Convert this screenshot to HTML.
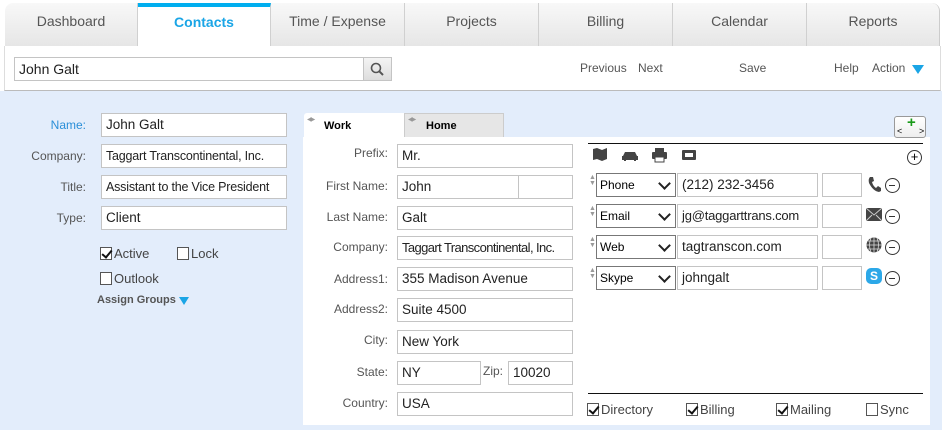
<!DOCTYPE html>
<html><head><style>
*{box-sizing:border-box;margin:0;padding:0}
body{width:942px;height:430px;overflow:hidden;background:#fff;font-family:"Liberation Sans",sans-serif;position:relative}
.a{position:absolute}
.tab{position:absolute;top:3px;height:43px;background:linear-gradient(#f8f8f8,#e6e6e6);border-right:1px solid #d0d0d0;text-align:center;line-height:37px;font-size:14px;color:#555}
.in{position:absolute;height:24px;border:1px solid #c4c4c4;background:#fff;font-size:13.5px;color:#222;padding-left:4px;line-height:22px;white-space:nowrap;overflow:hidden}
.lb{position:absolute;font-size:12px;color:#555;text-align:right}
.sel{position:absolute;height:24px;border:1px solid #777;background:#fff;font-size:12px;padding-left:3px;line-height:22px;width:80px}
.sel:after{content:"";position:absolute;right:6px;top:5px;width:7px;height:7px;border-right:2px solid #222;border-bottom:2px solid #222;transform:rotate(45deg)}
.cb{display:inline-block;width:12px;height:13px;border:1px solid #555;vertical-align:-2px;margin-right:2px;position:relative;background:#fff}
.cb.c:after{content:"";position:absolute;left:3px;top:0;width:4px;height:8px;border-right:2px solid #111;border-bottom:2px solid #111;transform:rotate(40deg)}
.ck{position:absolute;font-size:13px;color:#444}
.minus{position:absolute;width:15px;height:15px;border:1.5px solid #333;border-radius:50%}
.minus:after{content:"";position:absolute;left:3px;top:5.5px;width:6px;height:1.5px;background:#333}
.arr{position:absolute;font-size:7px;color:#999;line-height:6px}
</style></head><body>
<div class="a" style="left:0;top:0;width:942px;height:46px;background:#fff"></div>
<div class="tab" style="left:5px;width:133px;border-top-left-radius:8px">Dashboard</div>
<div class="tab" style="left:138px;width:133px;background:#fff;color:#1aa5e6;font-weight:bold;border-top:4px solid #00aeef;line-height:30px;height:44px">Contacts</div>
<div class="tab" style="left:271px;width:134px">Time / Expense</div>
<div class="tab" style="left:405px;width:134px">Projects</div>
<div class="tab" style="left:539px;width:134px">Billing</div>
<div class="tab" style="left:673px;width:134px">Calendar</div>
<div class="tab" style="left:807px;width:133px;border-top-right-radius:8px;border-right:1px solid #ccc">Reports</div>
<div class="a" style="left:4px;top:46px;width:937px;height:45px;background:#fff;border-bottom:1px solid #bbb;border-left:1px solid #ddd;border-right:1px solid #ddd"></div>
<div class="in" style="left:14px;top:57px;width:350px;height:24px;font-size:14px">John Galt</div>
<div class="a" style="left:363px;top:57px;width:29px;height:24px;border:1px solid #c4c4c4;background:linear-gradient(#f4f4f4,#ddd)"><svg width="27" height="22"><circle cx="12" cy="10" r="4.5" fill="none" stroke="#555" stroke-width="1.6"/><path d="M15 13l4 4" stroke="#555" stroke-width="2"/></svg></div>
<div class="a" style="left:580px;top:61px;font-size:12px;color:#555">Previous</div>
<div class="a" style="left:638px;top:61px;font-size:12px;color:#555">Next</div>
<div class="a" style="left:739px;top:61px;font-size:12px;color:#555">Save</div>
<div class="a" style="left:834px;top:61px;font-size:12px;color:#555">Help</div>
<div class="a" style="left:872px;top:61px;font-size:12px;color:#555">Action</div>
<div class="a" style="left:912px;top:65px;border-left:6px solid transparent;border-right:6px solid transparent;border-top:9px solid #1aa5e6"></div>
<div class="a" style="left:0;top:91px;width:942px;height:339px;background:#e3edfb"></div>

<div class="lb" style="left:0;width:86px;top:118px;color:#2a8fd8">Name:</div>
<div class="lb" style="left:0;width:86px;top:149px">Company:</div>
<div class="lb" style="left:0;width:86px;top:180px">Title:</div>
<div class="lb" style="left:0;width:86px;top:211px">Type:</div>
<div class="in" style="left:101px;top:113px;width:186px">John Galt</div>
<div class="in" style="left:101px;top:144px;width:186px;font-size:12.5px;letter-spacing:-0.2px">Taggart Transcontinental, Inc.</div>
<div class="in" style="left:101px;top:175px;width:186px;font-size:12.5px;letter-spacing:-0.2px">Assistant to the Vice President</div>
<div class="in" style="left:101px;top:206px;width:186px">Client</div>
<div class="ck" style="left:100px;top:246px"><span class="cb c"></span>Active</div>
<div class="ck" style="left:177px;top:246px"><span class="cb"></span>Lock</div>
<div class="ck" style="left:100px;top:271px"><span class="cb"></span>Outlook</div>
<div class="a" style="left:97px;top:294px;font-size:11px;color:#555;font-weight:bold">Assign Groups</div>
<div class="a" style="left:179px;top:297px;border-left:5px solid transparent;border-right:5px solid transparent;border-top:8px solid #1aa5e6"></div>

<div class="a" style="left:303px;top:137px;width:627px;height:288px;background:#fff"></div>
<div class="a" style="left:304px;top:113px;width:100px;height:25px;background:#fff;border-top-left-radius:3px;font-size:11px;font-weight:bold;padding:7px 0 0 20px">Work</div>
<div class="a" style="left:404px;top:113px;width:100px;height:24px;background:#e6e6e6;border:1px solid #ccc;border-bottom:none;font-size:11px;font-weight:bold;padding:6px 0 0 21px">Home</div>
<div class="a" style="left:307px;top:116px;font-size:6px;color:#999;letter-spacing:-1px">◀▶</div>
<div class="a" style="left:408px;top:116px;font-size:6px;color:#999;letter-spacing:-1px">◀▶</div>
<div class="a" style="left:894px;top:116px;width:32px;height:22px;border:1px solid #999;border-radius:3px;background:linear-gradient(#fff,#eee);font-size:9px"><span class="a" style="left:2px;top:9px">&lt;</span><span class="a" style="left:12px;top:-3px;color:#1a9a1a;font-size:15px;font-weight:bold">+</span><span class="a" style="left:24px;top:9px">&gt;</span></div>

<div class="lb" style="left:300px;width:88px;top:146px">Prefix:</div>
<div class="lb" style="left:300px;width:88px;top:179px">First Name:</div>
<div class="lb" style="left:300px;width:88px;top:210px">Last Name:</div>
<div class="lb" style="left:300px;width:88px;top:240px">Company:</div>
<div class="lb" style="left:300px;width:88px;top:272px">Address1:</div>
<div class="lb" style="left:300px;width:88px;top:302px">Address2:</div>
<div class="lb" style="left:300px;width:88px;top:333px">City:</div>
<div class="lb" style="left:300px;width:88px;top:365px">State:</div>
<div class="lb" style="left:470px;width:33px;top:364px">Zip:</div>
<div class="lb" style="left:300px;width:88px;top:396px">Country:</div>
<div class="in" style="left:397px;top:144px;width:176px">Mr.</div>
<div class="in" style="left:397px;top:175px;width:122px">John</div>
<div class="in" style="left:518px;top:175px;width:55px"></div>
<div class="in" style="left:397px;top:206px;width:176px">Galt</div>
<div class="in" style="left:397px;top:236px;width:176px;font-size:13px;letter-spacing:-0.6px">Taggart Transcontinental, Inc.</div>
<div class="in" style="left:397px;top:267px;width:176px">355 Madison Avenue</div>
<div class="in" style="left:397px;top:298px;width:176px">Suite 4500</div>
<div class="in" style="left:397px;top:330px;width:176px">New York</div>
<div class="in" style="left:397px;top:361px;width:84px">NY</div>
<div class="in" style="left:508px;top:361px;width:65px">10020</div>
<div class="in" style="left:397px;top:392px;width:176px">USA</div>

<div class="a" style="left:588px;top:143px;width:335px;height:1px;background:#111"></div>
<svg class="a" style="left:590px;top:146px" width="120" height="20" fill="#444"><path d="M3 3l4-1 5 2 5-2v11l-5 2-5-2-4 1z"/><path d="M33 10l2-4h10l2 4h1v4h-2v1h-2v-1h-8v1h-2v-1h-2v-4z"/><rect x="65" y="2" width="9" height="4"/><rect x="62" y="6" width="15" height="7" rx="1"/><rect x="65" y="11" width="9" height="5" fill="#fff" stroke="#444"/><rect x="92" y="4" width="14" height="10" rx="1"/><rect x="95" y="7" width="8" height="4" fill="#fff"/></svg>
<div class="a" style="left:907px;top:150px;width:15px;height:15px;border:1.5px solid #333;border-radius:50%;font-size:13px;line-height:11px;text-align:center">+</div>

<div class="arr" style="left:589px;top:175px">▲<br>▼</div>
<div class="arr" style="left:589px;top:206px">▲<br>▼</div>
<div class="arr" style="left:589px;top:237px">▲<br>▼</div>
<div class="arr" style="left:589px;top:268px">▲<br>▼</div>
<div class="sel" style="left:596px;top:173px">Phone</div>
<div class="sel" style="left:596px;top:204px">Email</div>
<div class="sel" style="left:596px;top:235px">Web</div>
<div class="sel" style="left:596px;top:266px">Skype</div>
<div class="in" style="left:677px;top:173px;width:141px">(212) 232-3456</div>
<div class="in" style="left:677px;top:204px;width:141px;font-size:13px;letter-spacing:-0.2px">jg@taggarttrans.com</div>
<div class="in" style="left:677px;top:235px;width:141px">tagtranscon.com</div>
<div class="in" style="left:677px;top:266px;width:141px">johngalt</div>
<div class="in" style="left:822px;top:173px;width:40px"></div>
<div class="in" style="left:822px;top:204px;width:40px"></div>
<div class="in" style="left:822px;top:235px;width:40px"></div>
<div class="in" style="left:822px;top:266px;width:40px"></div>
<svg class="a" style="left:867px;top:176px" width="14" height="16"><path d="M3 1l3 0 1 4-2 1q1 4 4 6l2-2 3 2v3l-2 1q-6-1-10-9q-1-4 1-6z" fill="#444"/></svg>
<svg class="a" style="left:866px;top:208px" width="16" height="13"><rect x="0" y="0" width="16" height="13" fill="#444"/><path d="M0 0l8 7 8-7M0 13l6-6M16 13l-6-6" stroke="#ccc" fill="none"/></svg>
<svg class="a" style="left:866px;top:237px" width="16" height="16"><circle cx="8" cy="8" r="7.5" fill="#444"/><path d="M0 8h16M8 0v16M2 4h12M2 12h12M5 1q-3 7 0 14M11 1q3 7 0 14" stroke="#ddd" stroke-width=".8" fill="none"/></svg>
<div class="a" style="left:866px;top:268px;width:16px;height:16px;border-radius:5px;background:#2ca8e8;color:#fff;font-weight:bold;font-size:12px;text-align:center;line-height:16px">S</div>
<div class="minus" style="left:885px;top:178px"></div>
<div class="minus" style="left:885px;top:209px"></div>
<div class="minus" style="left:885px;top:240px"></div>
<div class="minus" style="left:885px;top:271px"></div>

<div class="a" style="left:588px;top:393px;width:335px;height:1px;background:#111"></div>
<div class="ck" style="left:587px;top:402px"><span class="cb c"></span>Directory</div>
<div class="ck" style="left:686px;top:402px"><span class="cb c"></span>Billing</div>
<div class="ck" style="left:776px;top:402px"><span class="cb c"></span>Mailing</div>
<div class="ck" style="left:866px;top:402px"><span class="cb"></span>Sync</div>
</body></html>
